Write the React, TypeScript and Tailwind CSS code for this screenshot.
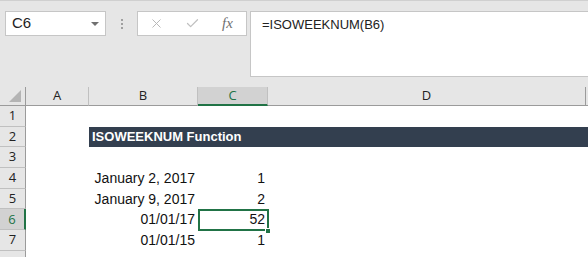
import { X, Check } from 'lucide-react';

const rows = [
  { n: 1, b: '', c: '' },
  { n: 2, b: 'ISOWEEKNUM Function', c: '', title: true },
  { n: 3, b: '', c: '' },
  { n: 4, b: 'January 2, 2017', c: '1' },
  { n: 5, b: 'January 9, 2017', c: '2' },
  { n: 6, b: '01/01/17', c: '52', active: true },
  { n: 7, b: '01/01/15', c: '1' },
];

export default function App() {
  return (
    <div className="w-[588px] h-[257px] overflow-hidden bg-white font-['Liberation_Sans',sans-serif] text-[#222]">
      {/* Formula bar */}
      <div className="h-[87px] bg-[#e6e6e6] border-t border-[#d0d0d0] flex items-start pt-[10px]">
        <div className="ml-[5px] w-[101px] h-[25px] bg-white border border-[#c6c6c6] flex items-center pl-[6px] pr-[6px]">
          <span className="flex-1 text-[15px] text-[#222]">C6</span>
          <span className="w-0 h-0 border-l-[4px] border-r-[4px] border-t-[4px] border-l-transparent border-r-transparent border-t-[#707070]" />
        </div>
        <div className="w-[31px] h-[25px] flex flex-col items-center justify-center gap-[2px]">
          <span className="w-[2px] h-[2px] bg-[#a0a0a0]" />
          <span className="w-[2px] h-[2px] bg-[#a0a0a0]" />
          <span className="w-[2px] h-[2px] bg-[#a0a0a0]" />
        </div>
        <div className="w-[110px] h-[25px] bg-white border border-[#c6c6c6] flex items-center">
          <X className="ml-[11px] w-[15px] h-[15px] text-[#b4b4b4]" strokeWidth={1.5} />
          <Check className="ml-[21px] w-[15px] h-[15px] text-[#c0c0c0]" strokeWidth={2} />
          <span className="ml-[22px] text-[15px] italic font-['Liberation_Serif',serif] text-[#707070]">fx</span>
        </div>
        <div className="ml-[3px] flex-1 h-[66px] bg-white border border-r-0 border-[#c6c6c6] pl-[11px] pt-[3px] text-[13px] text-[#222]">
          =ISOWEEKNUM(B6)
        </div>
      </div>

      {/* Sheet */}
      <div className="grid grid-cols-[26px_63px_109px_70px_320px]">
        {/* Column headers */}
        <div className="h-[19px] bg-[#e6e6e6] border-b border-r border-[#9b9b9b] flex items-end justify-end pr-[4px] pb-[3px]">
          <span className="w-0 h-0 border-b-[12px] border-l-[12px] border-b-[#b4b4b4] border-l-transparent" />
        </div>
        <div className="h-[19px] bg-[#e6e6e6] border-b border-r border-[#9b9b9b] border-r-[#c0c0c0] flex items-center justify-center text-[13px] font-['Open_Sans',sans-serif]">A</div>
        <div className="h-[19px] bg-[#e6e6e6] border-b border-r border-[#9b9b9b] border-r-[#c0c0c0] flex items-center justify-center text-[13px] font-['Open_Sans',sans-serif]">B</div>
        <div className="h-[19px] bg-[#d2d2d2] border-b-2 border-r border-b-[#217346] border-r-[#c0c0c0] flex items-center justify-center text-[13px] text-[#217346] font-['Open_Sans',sans-serif]">C</div>
        <div className="h-[19px] bg-[#e6e6e6] border-b border-[#9b9b9b] flex items-center justify-center text-[13px] font-['Open_Sans',sans-serif]">
          <span className="flex-1 text-center">D</span>
          <span className="w-[1px] h-full bg-[#9b9b9b] mr-[2px]" />
        </div>

        {rows.map((r) => (
          <Row key={r.n} {...r} />
        ))}
        <div className="h-[20.7px] bg-[#e6e6e6] border-r border-[#9b9b9b]" />
      </div>
    </div>
  );
}

function Row({ n, b, c, title, active }: { n: number; b: string; c: string; title?: boolean; active?: boolean }) {
  return (
    <>
      <div
        className={
          active
            ? 'h-[20.7px] bg-[#d2d2d2] border-b border-[#c0c0c0] border-r-2 border-r-[#217346] flex items-center justify-center text-[13px] text-[#217346] font-["Open_Sans",sans-serif]'
            : 'h-[20.7px] bg-[#e6e6e6] border-b border-r border-[#c0c0c0] border-r-[#9b9b9b] flex items-center justify-center text-[13px] font-["Open_Sans",sans-serif]'
        }
      >
        {n}
      </div>
      <div className="h-[20.7px]" />
      {title ? (
        <div className="col-span-3 h-[20.7px] bg-[#333f4f] flex items-center pl-[3px] text-[13px] font-bold text-white">
          {b}
        </div>
      ) : (
        <>
          <div className="h-[20.7px] flex items-center justify-end pr-[3px] text-[14px] text-[#111]">{b}</div>
          <div className="h-[20.7px] relative flex items-center justify-end pr-[3px] text-[14px] text-[#111]">
            {active && (
              <>
                <span className="absolute left-0 top-0 w-[71px] h-[22px] border-2 border-[#217346]" />
                <span className="absolute left-[67px] top-[19px] w-[6px] h-[6px] bg-[#217346] border border-white" />
              </>
            )}
            <span className="relative">{c}</span>
          </div>
          <div className="h-[20.7px]" />
        </>
      )}
    </>
  );
}
